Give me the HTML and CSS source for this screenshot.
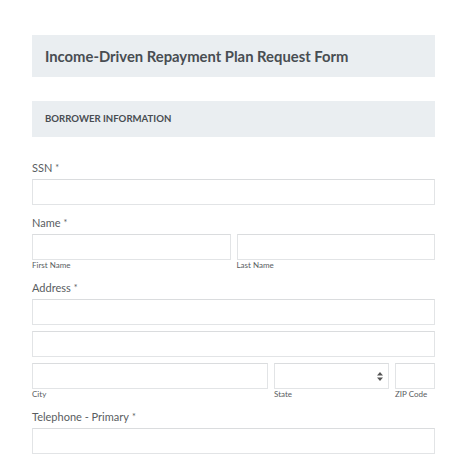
FILE: index.html
```html
<!DOCTYPE html>
<html lang="en">
<head>
  <meta charset="UTF-8" />
  <meta name="viewport" content="width=device-width, initial-scale=1.0"/>
  <title>Income-Driven Repayment Plan Request Form</title>
  <link rel="stylesheet" href="styles.css">
</head>
<body>
  <div class="form-container">
    <div class="form-title">Income-Driven Repayment Plan Request Form</div>
    <div class="section-head">BORROWER INFORMATION</div>

    <div class="field">
      <label class="field-label">SSN<span class="req">*</span></label>
      <input class="text-input" type="text">
    </div>

    <div class="field">
      <label class="field-label">Name<span class="req">*</span></label>
      <div class="row">
        <div class="col">
          <input class="text-input" type="text">
          <div class="sub-label">First Name</div>
        </div>
        <div class="col">
          <input class="text-input" type="text">
          <div class="sub-label">Last Name</div>
        </div>
      </div>
    </div>

    <div class="field">
      <label class="field-label">Address<span class="req">*</span></label>
      <div class="stack">
        <input class="text-input" type="text">
        <input class="text-input" type="text">
        <div class="row address-row">
          <div class="col city">
            <input class="text-input" type="text">
            <div class="sub-label">City</div>
          </div>
          <div class="col state">
            <div class="select-box">
              <svg class="select-arrows" width="6" height="9" viewBox="0 0 6 9">
                <path d="M3 0 L6 3.4 L0 3.4 Z M3 9 L6 5.6 L0 5.6 Z" fill="#555"/>
              </svg>
            </div>
            <div class="sub-label">State</div>
          </div>
          <div class="col zip">
            <input class="text-input" type="text">
            <div class="sub-label">ZIP Code</div>
          </div>
        </div>
      </div>
    </div>

    <div class="field">
      <label class="field-label">Telephone - Primary<span class="req">*</span></label>
      <input class="text-input" type="text">
    </div>
  </div>
</body>
</html>
```

FILE: styles.css
```css
body {
  margin: 0;
  font-family: Lato, "Open Sans", Arial, sans-serif;
  background-color: #ffffff;
}

.form-container {
  width: 403px;
  padding: 35px 0 0 32px;
}

.form-title {
  background-color: #eaeef1;
  height: 42px;
  line-height: 42px;
  padding-left: 13px;
  font-size: 14.8px;
  font-weight: 700;
  color: #484d52;
}

.section-head {
  background-color: #eaeef1;
  margin-top: 24px;
  height: 36px;
  line-height: 36px;
  padding-left: 13px;
  font-size: 9.6px;
  font-weight: 700;
  color: #484d52;
}

.field {
  display: flex;
  flex-direction: column;
}

.section-head + .field {
  margin-top: 24px;
}

.field + .field {
  margin-top: 11px;
}

.field-label {
  font-size: 11px;
  line-height: 14px;
  color: #595d61;
  margin-bottom: 4px;
}

.req {
  font-size: 9px;
  vertical-align: top;
  margin-left: 3px;
}

.text-input,
.select-box {
  box-sizing: border-box;
  width: 100%;
  height: 26px;
  margin: 0;
  border: 1px solid #e2e4e6;
  border-top-color: #dadcde;
  background-color: #ffffff;
  display: block;
}

.row {
  display: flex;
  gap: 6px;
}

.col {
  flex: 1;
  min-width: 0;
}

.stack {
  display: flex;
  flex-direction: column;
  gap: 6px;
}

.address-row .city {
  flex: 0 0 236px;
}

.address-row .state {
  flex: 0 0 115px;
}

.address-row .zip {
  flex: 1;
}

.select-box {
  display: flex;
  align-items: center;
  justify-content: flex-end;
  padding-right: 5px;
}

.sub-label {
  font-size: 8px;
  line-height: 9px;
  margin-top: 1px;
  color: #595d61;
}
```
